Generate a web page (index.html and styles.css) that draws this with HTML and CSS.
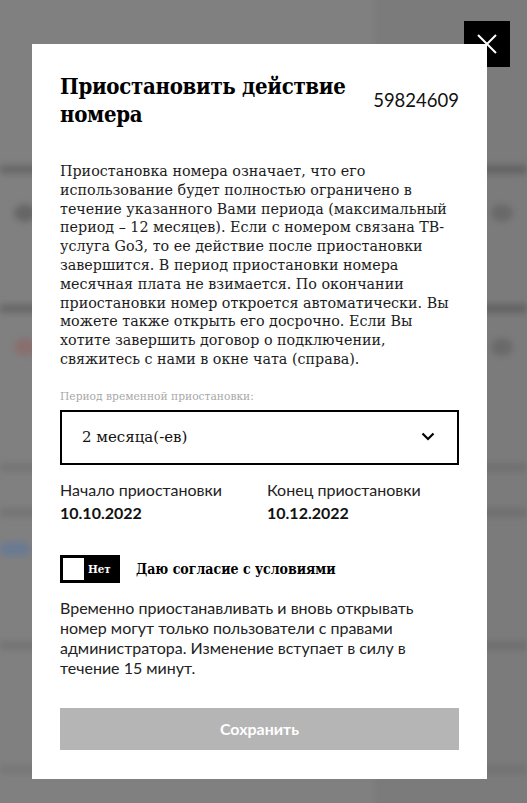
FILE: index.html
```html
<!DOCTYPE html>
<html lang="ru">
<head>
<meta charset="utf-8">
<title>Приостановить действие номера</title>
<link rel="stylesheet" href="styles.css">
</head>
<body>
<div class="page">
  <div class="band b1"></div>
  <div class="row r1"><span class="blob dark"></span><span class="blob dark right"></span></div>
  <div class="band b2"></div>
  <div class="row r2"><span class="blob red"></span><span class="blob dark right"></span></div>
  <div class="band b3"></div>
  <div class="band b4"></div>
  <div class="row r3"><span class="blob blue"></span></div>
  <div class="band b5"></div>
  <div class="band b6"></div>
</div>
<div class="overlay"></div>

<button class="close" aria-label="Закрыть">
  <svg width="20" height="20" viewBox="0 0 20 20"><path d="M1 1L19 19M19 1L1 19" stroke="#fff" stroke-width="2" fill="none"/></svg>
</button>

<div class="modal">
  <div class="head">
    <h1 class="title">Приостановить действие номера</h1>
    <div class="number">59824609</div>
  </div>

  <p class="desc">Приостановка номера означает, что его использование будет полностью ограничено в течение указанного Вами периода (максимальный период – 12 месяцев). Если с номером связана ТВ-услуга Go3, то ее действие после приостановки завершится. В период приостановки номера месячная плата не взимается. По окончании приостановки номер откроется автоматически. Вы можете также открыть его досрочно. Если Вы хотите завершить договор о подключении, свяжитесь с нами в окне чата (справа).</p>

  <div class="field-label">Период временной приостановки:</div>
  <div class="select">
    <span class="select-value">2 месяца(-ев)</span>
    <svg class="chev" width="14" height="9" viewBox="0 0 14 9"><path d="M1.5 1.5L7 7L12.5 1.5" stroke="#000" stroke-width="2.2" fill="none"/></svg>
  </div>

  <div class="dates">
    <div class="date">
      <div class="date-label">Начало приостановки</div>
      <div class="date-value">10.10.2022</div>
    </div>
    <div class="date">
      <div class="date-label">Конец приостановки</div>
      <div class="date-value">10.12.2022</div>
    </div>
  </div>

  <div class="consent">
    <div class="toggle"><span class="knob"></span><span class="toggle-text">Нет</span></div>
    <span class="consent-text">Даю согласие с условиями</span>
  </div>

  <p class="note">Временно приостанавливать и вновь открывать номер могут только пользователи с правами администратора. Изменение вступает в силу в течение 15 минут.</p>

  <button class="save" disabled>Сохранить</button>
</div>
</body>
</html>
```

FILE: styles.css
```css
html, body {
  margin: 0;
  padding: 0;
}
body {
  background: #808080;
  height: 803px;
  overflow: hidden;
  font-family: "DejaVu Serif", serif;
}

/* blurred page behind the overlay */
.page {
  filter: blur(3px);
  padding-top: 165px;
}
.band {
  height: 9px;
  background: #686868;
}
.b3 { background: #757575; margin-top: 80px; }
.b4 { background: #747474; margin-top: 36px; }
.b5 { background: #747474; margin-top: 60px; }
.b6 { background: #777777; margin-top: 115px; }
.row {
  display: flex;
  justify-content: space-between;
  align-items: center;
}
.r1 { height: 130px; padding: 30px 14px 0; align-items: flex-start; box-sizing: border-box; }
.r2 { height: 70px; padding: 25px 14px 0; align-items: flex-start; box-sizing: border-box; }
.r3 { height: 64px; }
.blob {
  display: block;
  width: 22px;
  height: 18px;
  border-radius: 50%;
}
.blob.dark { background: #666; }
.blob.red { background: #8a6e6e; }
.blob.blue { background: #6a7a92; width: 30px; height: 14px; border-radius: 6px; }
.blob.right { opacity: .7; }

.overlay {
  position: fixed;
  inset: 0;
  background: linear-gradient(90deg, rgba(0,0,0,0) 0, rgba(0,0,0,0) 370px, rgba(0,0,0,0.04) 380px);
}

.close {
  position: fixed;
  top: 21px;
  left: 464px;
  width: 46px;
  height: 46px;
  border: 0;
  padding: 0;
  background: #000;
  display: flex;
  align-items: center;
  justify-content: center;
}

.modal {
  position: fixed;
  top: 44px;
  left: 32px;
  width: 455px;
  height: 735px;
  box-sizing: border-box;
  background: #fff;
  padding: 28px 28px 0 28px;
  display: flex;
  flex-direction: column;
  color: #1c1c1c;
}

.head {
  display: flex;
  align-items: center;
  justify-content: space-between;
}
.title {
  margin: 0;
  font-family: "DejaVu Serif Condensed", "DejaVu Serif", serif;
  font-weight: bold;
  font-size: 22px;
  line-height: 28px;
  color: #000;
  width: 300px;
  letter-spacing: -0.3px;
}
.number {
  font-family: Lato, sans-serif;
  font-size: 18.5px;
  color: #111;
}

.desc {
  margin: 34px 0 0 0;
  font-size: 14.3px;
  line-height: 18.8px;
  color: #1c1c1c;
}

.field-label {
  margin-top: 21px;
  font-size: 10.7px;
  color: #a8a8a8;
  line-height: 14px;
}
.select {
  margin-top: 6px;
  height: 55px;
  box-sizing: border-box;
  border: 2px solid #000;
  display: flex;
  align-items: center;
  justify-content: space-between;
  padding: 0 22px 0 20px;
}
.select-value {
  font-size: 15px;
  color: #111;
}
.chev { display: block; margin-top: -2px; }

.dates {
  display: flex;
  margin-top: 15px;
  font-family: Lato, sans-serif;
}
.date { flex: 0 0 207px; }
.date-label {
  font-size: 16px;
  line-height: 20px;
  color: #222;
}
.date-value {
  font-size: 16px;
  line-height: 20px;
  font-weight: bold;
  color: #111;
  margin-top: 3px;
}

.consent {
  margin-top: 32px;
  display: flex;
  align-items: center;
}
.toggle {
  width: 60px;
  height: 28px;
  box-sizing: border-box;
  background: #000;
  display: flex;
  align-items: center;
  padding: 0 0 0 3px;
}
.knob {
  width: 21px;
  height: 22px;
  background: #fff;
  display: block;
}
.toggle-text {
  margin-left: 4px;
  font-weight: bold;
  font-size: 11.5px;
  color: #fff;
  font-family: "DejaVu Serif Condensed", "DejaVu Serif", serif;
}
.consent-text {
  margin-left: 16px;
  font-family: "DejaVu Serif Condensed", "DejaVu Serif", serif;
  font-weight: bold;
  font-size: 14px;
  color: #000;
}

.note {
  margin: 15px 0 0 0;
  font-family: Lato, sans-serif;
  font-size: 16px;
  line-height: 20px;
  color: #222;
}

.save {
  margin-top: 30px;
  height: 42px;
  border: 0;
  background: #b5b5b5;
  color: #fff;
  font-family: Lato, sans-serif;
  font-weight: bold;
  font-size: 16px;
  width: 100%;
}
```
